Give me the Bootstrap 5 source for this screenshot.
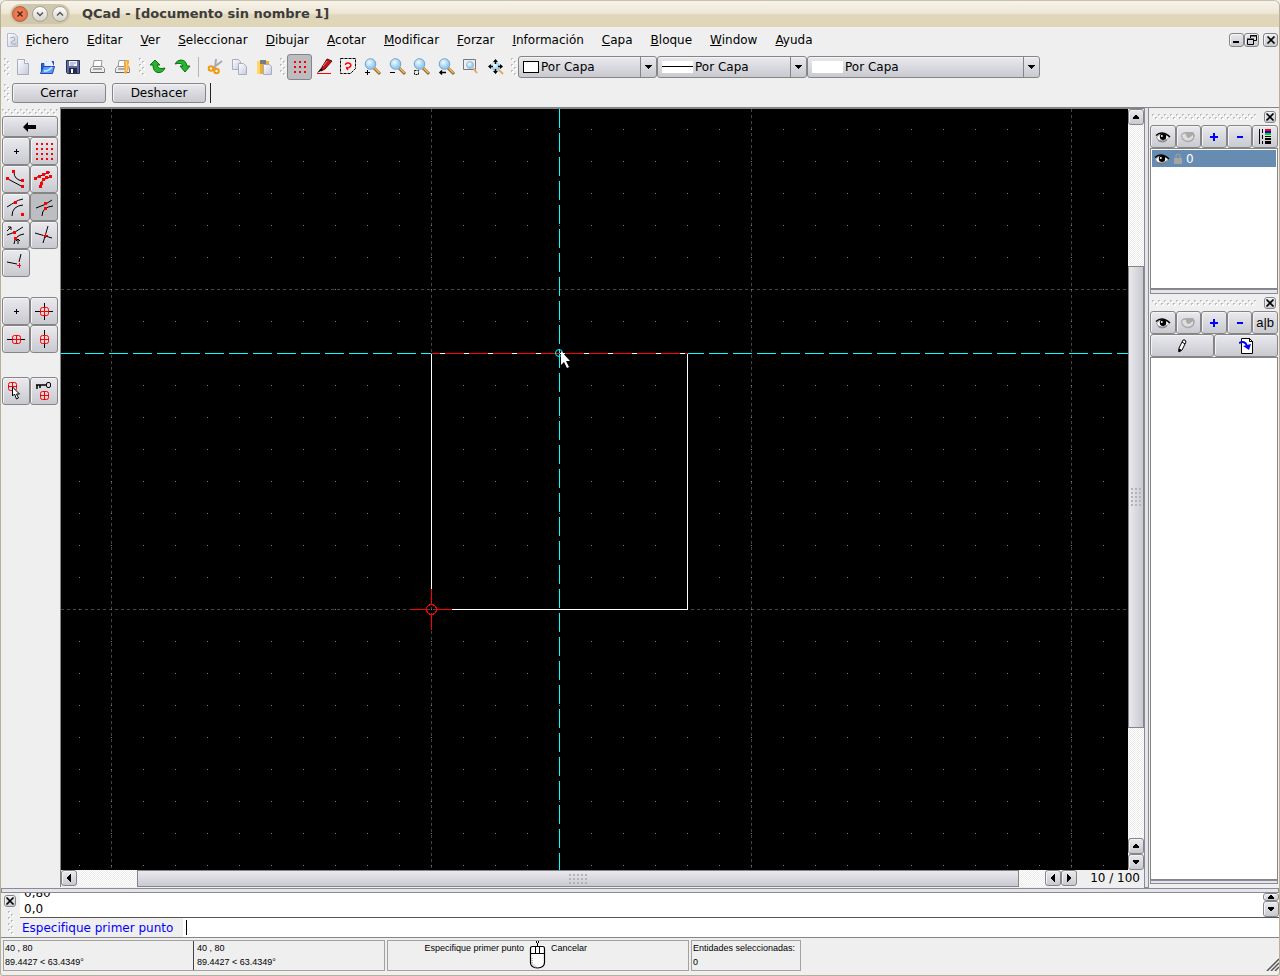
<!DOCTYPE html>
<html lang="es">
<head>
<meta charset="utf-8">
<meta name="viewport" content="width=device-width, initial-scale=1">
<title>QCad - [documento sin nombre 1]</title>
<link href="https://cdn.jsdelivr.net/npm/bootstrap@5.3.0/dist/css/bootstrap.min.css" rel="stylesheet">
<style>
  :root { --face: #efefef; --edge: #858585; --btn: linear-gradient(#e9e9ee, #c9cad0); }
  body { font-family: "DejaVu Sans", sans-serif; font-size: 12px; line-height: 16px; color: #000; background: #efefef; }
  svg { display: block; flex: none; }
  .win { border: 1px solid #b9ae96; border-top-color: #c9c0aa; border-radius: 6px 6px 3px 3px; background: var(--face); }
  /* title bar */
  .titlebar { height: 26px; padding-left: 9px; border-radius: 5px 5px 0 0; background: linear-gradient(#f7f3ea 0, #eee7d6 45%, #e0d6b9 55%, #dfd5b7 100%); }
  .titlebar h1 { font-size: 13px; line-height: 16px; font-weight: bold; color: #3c3c3c; margin: 0 0 0 12px; }
  .wbtns { height: 20px; border-radius: 10px; padding: 0 2px; gap: 4px; background: #cfc6ae; }
  .wbtns button { border: 1px solid #a9a292; border-radius: 50%; width: 16px; height: 16px; padding: 0; background: linear-gradient(#fff, #d5d1c6); display: flex; align-items: center; justify-content: center; }
  .wbtns .close-w { background: radial-gradient(#f58a63, #e2673f); border-color: #b0603f; }
  /* menu */
  .menubar { height: 26px; padding: 0 1px 0 5px; }
  .menubar a { color: #000; text-decoration: none; padding: 0 9px; }
  .menubar a:first-of-type { padding-left: 7px; }
  .menubar u { text-underline-offset: 1px; }
  /* generic button */
  .qb { border: 1px solid var(--edge); border-radius: 3px; background: var(--btn); padding: 0; color: #000; display: flex; align-items: center; justify-content: center; box-shadow: inset 1px 1px 0 #f4f4f7; }
  .qb.on { background: #bdbec2; box-shadow: none; }
  .mini { width: 12px; height: 12px; }
  .mdi { width: 15px; height: 14px; }
  /* drag handles */
  .grip { background-image: url("data:image/svg+xml,%3Csvg xmlns='http://www.w3.org/2000/svg' width='6' height='6'%3E%3Cpath fill='%23fff' d='M1 1h2v2H1zM4 4h2v2H4z'/%3E%3Cpath fill='%23bdbdbd' d='M0 0h2v1H1v1H0zM3 3h2v1H4v1H3z'/%3E%3C/svg%3E"); flex: none; }
  .grip-v { width: 6px; height: 18px; }
  .grip-h { height: 6px; }
  .tools { height: 27px; padding-left: 3px; }
  .tb { border: 0; background: none; width: 25px; height: 26px; padding: 0; display: flex; align-items: center; justify-content: center; }
  .tb.on { border: 1px solid var(--edge); border-radius: 3px; background: #bcbdc1; }
  .viewtools { width: 196px; }
  .viewtools .tb { flex: 1 1 0; min-width: 0; }
  .sep { width: 1px; height: 20px; background: #b4b4b4; }
  .tools .sep { margin: 0 3px; }
  .tools .grip-mid { margin: 0 1px 0 3px; }
  .combo { border: 1px solid var(--edge); border-radius: 3px; background: var(--btn); height: 22px; box-shadow: inset 0 1px 0 #f4f4f7; }
  .combo select { appearance: none; border: 0; outline: 0; padding: 0 0 0 2px; height: 20px; flex: 1; min-width: 0; font-size: 12px; line-height: 16px; color: #000;
    background: url("data:image/svg+xml,%3Csvg xmlns='http://www.w3.org/2000/svg' width='16' height='20'%3E%3Cpath fill='%23858585' d='M0 0h1v20H0z'/%3E%3Cpath d='M5 8h7v1h-1v1h-1v1H9v1H8v-1H7v-1H6V9H5z'/%3E%3C/svg%3E") right top no-repeat; }
  .sw { width: 31px; height: 12px; background: #fff; margin-left: 4px; }
  .sw-box { width: 16px; border: 1px solid #000; }
  .sw-line { background: linear-gradient(#000, #000) center / 100% 1px no-repeat #fff; }
  .opts { height: 27px; padding: 0 0 2px 3px; }
  .opts .qb { height: 20px; width: 94px; margin-left: 2px; }
  .opts .qb + .qb { margin-left: 6px; }
  /* tool palette */
  .palette { width: 59px; flex: none; padding: 2px 2px 0 1px; }
  .palette .grip { margin-bottom: 1px; }
  .palette .qb { width: 28px; height: 28px; }
  .palette .qb.back { width: 56px; height: 21px; }
  /* drawing area */
  .frame { border: 2px solid #858585; border-width: 2px 0 0 1px; min-width: 0; margin-bottom: 1px; }
  .paper { background: #000; min-width: 0; min-height: 0; overflow: hidden; }
  .paper svg { width: 100%; height: 100%; }
  .vbar { width: 16px; flex: none; }
  .hbar { height: 17px; flex: none; }
  .vbar .qb, .hbar .qb { width: 16px; height: 16px; flex: none; }
  .track { background: repeating-conic-gradient(#fff 0 25%, #ececec 0 50%) 0 0 / 2px 2px; flex-basis: 0; }
  .thumb { border: 1px solid var(--edge); background: var(--btn); flex-basis: 0; display: flex; align-items: center; justify-content: center; }
  .vbar .thumb { background: linear-gradient(90deg, #e9e9ee, #c9cad0); }
  .knurl { width: 18px; height: 10px; background: radial-gradient(circle at 1px 1px, #b4b4b8 1px, transparent 1px) 0 0 / 4px 4px; }
  .vbar .knurl { width: 10px; height: 18px; }
  .zoomtxt { width: 67px; text-align: right; padding-right: 4px; flex: none; }
  .split { border: 1px solid #8a8b94; background: #e4e4ea; flex: none; }
  .dock { width: 130px; flex: none; border-top: 1px solid var(--edge); padding: 0 1px; }
  .dock-head { height: 17px; padding: 0 2px; }
  .dock .qb.cell { height: 23px; flex: 1 1 0; }
  .dock .qb.abtxt { font-family: "Liberation Sans", sans-serif; font-size: 13px; }
  .dock ul { list-style: none; margin: 0; padding: 1px; background: #fff; border: 1px solid #858585; }
  .dock li { background: #668cb2; color: #fff; height: 17px; padding-left: 2px; }
  .layers { height: 141px; }
  /* command line */
  .cmd { height: 45px; flex: none; border-bottom: 1px solid var(--edge); }
  .cmd-side { width: 19px; padding: 2px 0 0 3px; }
  .history { height: 25px; background: #fff; border-bottom: 1px solid #555; }
  .history .lines { padding-left: 4px; overflow: hidden; }
  .history .qb { width: 16px; }
  .prompt { color: #00f; padding: 0 10px 0 2px; }
  .entry { border: 0; outline: 0; background: #fff; padding: 0; min-width: 0; height: 19px; }
  .caret-i { width: 1px; height: 15px; background: #000; margin-left: 3px; }
  .entrybox { background: #fff; }
  /* status */
  .stat { height: 37px; font-family: "Liberation Sans", sans-serif; font-size: 9px; line-height: 14px; padding: 2px 0 0 2px; gap: 2px; flex: none; }
  .stat .pane { border: 1px solid #a2a2a2; height: 31px; padding-left: 1px; }
  .co1 { width: 188px; } .co2 { width: 191px; border-left: 1px solid #444; padding-left: 3px; height: 29px; }
  .hint { width: 302px; } .hint span { width: 135px; text-align: right; }
  .hint span + svg + span { text-align: left; width: 100px; }
  .selcount { width: 110px; }
</style>
</head>
<body>
<svg width="0" height="0" class="position-absolute" aria-hidden="true">
  <defs>
    <linearGradient id="gp" x2="1" y2="1"><stop stop-color="#fff"/><stop offset="1" stop-color="#c5c9de"/></linearGradient>
    <radialGradient id="gl" cx=".4" cy=".35"><stop stop-color="#f2fbff"/><stop offset="1" stop-color="#94cdf0"/></radialGradient>
    <symbol id="page" viewBox="0 0 16 16"><path d="M2.500 .5h7l4 4v11h-11z" fill="url(#gp)" stroke="#a9adc2"/><path d="M9.500 .5v4h4" fill="#fff" stroke="#a9adc2"/></symbol>
    <symbol id="lens" viewBox="0 0 18 18"><path d="M10 10l6 6" stroke="#8a6630" stroke-width="3"/><path d="M10.500 10l5 5" stroke="#f5b65c" stroke-width="1.500"/><circle cx="6.500" cy="6" r="5.300" fill="url(#gl)" stroke="#7b9fc8"/></symbol>
    <symbol id="eye" viewBox="0 0 16 12"><path d="M1.500 6Q7 0 14.500 6Q10 11.500 3 9z" fill="#fff" stroke="#999"/><path d="M1 4.500Q7-1 15 6" fill="none" stroke="#000" stroke-width="1.500"/><circle cx="8" cy="5.800" r="3.200"/><circle cx="6.800" cy="5" r="1" fill="#fff"/><path d="M3 9.500q5 3 9-.5" fill="none" stroke="#777"/></symbol>
    <symbol id="eyeoff" viewBox="0 0 16 12"><path d="M1 4Q2 1 7 1h6l2 3-1 4q-3 4-8 3Q1 9 1 4z" fill="#aaa"/><path d="M2 4q2-2 4-1 0 4 3 4l4-3v3q-3 4-8 2-3-2-3-5z" fill="#dedede"/></symbol>
    <symbol id="x" viewBox="0 0 10 10"><path d="M1.500 1.500l7 7M8.500 1.500l-7 7" stroke="#000" stroke-width="1.700"/></symbol>
    <symbol id="up" viewBox="0 0 8 4"><path d="M3 0h2v1h1v1h1v2H1V2h1V1h1z"/></symbol>
    <symbol id="dn" viewBox="0 0 8 4"><path d="M1 0h6v2H6v1H5v1H3V3H2V2H1z"/></symbol>
    <symbol id="lf" viewBox="0 0 4 8"><path d="M4 0v8H3V7H2V6H1V5H0V3h1V2h1V1h1V0z"/></symbol>
    <symbol id="rt" viewBox="0 0 4 8"><path d="M0 0v8h1V7h1V6h1V5h1V3H3V2H2V1H1V0z"/></symbol>
    <symbol id="tgt" viewBox="0 0 10 10"><rect x="1.500" y="1.500" width="8" height="8" rx="2" fill="none" stroke="#f00"/><path d="M1 5.500h8M5.500 1v8" stroke="#f00" fill="none"/></symbol>
  </defs>
</svg>
<div class="win d-flex flex-column vh-100 overflow-hidden">
  <header class="titlebar d-flex align-items-center">
    <div class="wbtns d-flex align-items-center">
      <button class="close-w" aria-label="Cerrar ventana"><svg width="8" height="8"><path d="M1.500 1.500l5 5M6.500 1.500l-5 5" stroke="#5a2a18" stroke-width="1.600"/></svg></button>
      <button aria-label="Minimizar ventana"><svg width="8" height="6"><path d="M1 1.500l3 3 3-3" fill="none" stroke="#555" stroke-width="1.500"/></svg></button>
      <button aria-label="Maximizar ventana"><svg width="8" height="6"><path d="M1 4.500l3-3 3 3" fill="none" stroke="#555" stroke-width="1.500"/></svg></button>
    </div>
    <h1>QCad - [documento sin nombre 1]</h1>
  </header>

  <nav class="menubar d-flex align-items-center" aria-label="Menú">
    <svg width="13" height="14" viewBox="0 0 13 14"><path d="M1.500 .5h7l3 3v10h-10z" fill="url(#gp)" stroke="#b5bac9"/><path d="M4 5l4-1 1 3-4 2 1 2h4" fill="none" stroke="#a3adc0"/></svg>
    <a href="#"><u>F</u>ichero</a><a href="#"><u>E</u>ditar</a><a href="#"><u>V</u>er</a><a href="#"><u>S</u>eleccionar</a><a href="#"><u>D</u>ibujar</a><a href="#"><u>A</u>cotar</a><a href="#"><u>M</u>odificar</a><a href="#"><u>F</u>orzar</a><a href="#"><u>I</u>nformación</a><a href="#"><u>C</u>apa</a><a href="#"><u>B</u>loque</a><a href="#"><u>W</u>indow</a><a href="#"><u>A</u>yuda</a>
    <div class="d-flex ms-auto">
      <button class="qb mdi" aria-label="Minimizar"><svg width="7" height="8"><path d="M0 5h6v2H0z"/></svg></button>
      <button class="qb mdi" aria-label="Restaurar"><svg width="10" height="10"><path d="M3.500 3V.5h6v5H7M3 1h7" fill="none" stroke="#000"/><path d="M.5 4.500h6v5h-6zM0 4h7" fill="none" stroke="#000"/></svg></button>
      <button class="qb mdi ms-1" aria-label="Cerrar documento"><svg width="10" height="10"><use href="#x"/></svg></button>
    </div>
  </nav>

  <div class="tools d-flex align-items-center" role="toolbar" aria-label="Herramientas">
    <span class="grip grip-v"></span>
    <button class="tb" aria-label="Nuevo"><svg width="16" height="16"><use href="#page"/></svg></button>
    <button class="tb" aria-label="Abrir"><svg width="18" height="16"><path d="M2.500 14V4.500h4l1-2h7V8" fill="#2f62d8" stroke="#1f49b0"/><path d="M5 3l7-2 3 6-9 3z" fill="#e7f0ff"/><path d="M1.500 14.500l3-7h11l-2 7z" fill="#5b98ff" stroke="#1f49b0"/><path d="M5 12q5 0 8-4" stroke="#bfe0ff" fill="none" stroke-width="2"/></svg></button>
    <button class="tb" aria-label="Guardar"><svg width="16" height="16"><path d="M1.500 1.500h13v13h-12l-1-1z" fill="#5f6a9e" stroke="#2b3158"/><path d="M4 2h8v5H4z" fill="#f2f3fa"/><path d="M5 4h6M5 6h4" stroke="#8b93b5"/><path d="M4 9h8v5H4z" fill="#252a48"/><path d="M6 10h2v4H6z" fill="#fff"/></svg></button>
    <button class="tb" aria-label="Imprimir"><svg width="17" height="16"><path d="M5 1.500h8l-1 7H4z" fill="#fff" stroke="#999"/><path d="M1.500 9.500l2-2h10l2 2v4h-14z" fill="#eeeeea" stroke="#888"/><path d="M2 13.500h13M4 10h9" stroke="#666"/></svg></button>
    <button class="tb" aria-label="Vista previa"><svg width="17" height="16"><path d="M5 1.500h8l-1 7H4z" fill="#fff" stroke="#999"/><path d="M1.500 9.500l2-2h10l2 2v4h-14z" fill="#eeeeea" stroke="#888"/><path d="M2 13.500h13M4 10h9" stroke="#666"/><path d="M10 2l5-1v3l-1 2 2 2-2 3-2 4-2-1 1-4-1-2z" fill="#f9a53a"/><path d="M12 2l1 5-1 5" stroke="#ffe48a" fill="none"/></svg></button>
    <span class="grip grip-v ms-1"></span>
    <button class="tb" aria-label="Deshacer acción"><svg width="17" height="15"><path d="M1 6l5-5 5 5H8q1 5 8 3-2 5-7 4.500Q4 13 4 6z" fill="#25b82d" stroke="#0b6d12"/></svg></button>
    <button class="tb" aria-label="Rehacer"><svg width="17" height="15"><path d="M1 5q2-4 6-4 5 0 6 6h3l-5 6-5-6h3Q8 3 1 5z" fill="#25b82d" stroke="#0b6d12"/></svg></button>
    <span class="sep"></span>
    <button class="tb" aria-label="Cortar"><svg width="16" height="17"><path d="M9 1l-1 9M15 3L6 10" stroke="#a5aab8" stroke-width="2"/><circle cx="4" cy="10.500" r="2.300" fill="none" stroke="#f09a10" stroke-width="2"/><circle cx="9.500" cy="13" r="2.300" fill="none" stroke="#f09a10" stroke-width="2"/></svg></button>
    <button class="tb" aria-label="Copiar"><svg width="17" height="16"><path d="M1.500 .5h6l2 2v8h-8z" fill="url(#gp)" stroke="#a9adc2"/><path d="M7.500 4.500h5l3 3v8h-8z" fill="url(#gp)" stroke="#a9adc2"/></svg></button>
    <button class="tb" aria-label="Pegar"><svg width="17" height="16"><path d="M1 2h12v13H1z" fill="#f1ae2e"/><path d="M1 2h3v13H1z" fill="#ffd66a"/><path d="M4 1h6v4H4z" fill="#777b82"/><path d="M7.500 5.500h6l2 2v8h-8z" fill="url(#gp)" stroke="#a9adc2"/></svg></button>
    <span class="grip grip-v grip-mid"></span>
    <button class="tb on" aria-label="Rejilla" aria-pressed="true"><svg width="12" height="12"><path d="M0 1h12M0 6h12M0 11h12" stroke="#f00" stroke-width="2" stroke-dasharray="2 3"/></svg></button>
    <div class="viewtools d-flex">
      <button class="tb" aria-label="Borrador"><svg width="17" height="17"><path d="M1 15.500h14" stroke="#f00"/><path d="M11 1l5 2-7 8-4 2 1-4z" fill="#c8141b" stroke="#5a0808"/><path d="M11 3L7 8" stroke="#ff7f7f"/><path d="M1 15l4-5 2 2z" fill="#111"/></svg></button>
      <button class="tb" aria-label="Redibujar"><svg width="17" height="17"><path d="M.5 .5h15v10l-5 5H.5z" fill="none" stroke="#000" stroke-dasharray="3 1"/><path d="M5.500 7q0-2 2.500-2t3 2q0 2-3 3H6M7.500 9l-1 1 1.500 2" fill="none" stroke="#f00" stroke-width="1.300"/></svg></button>
      <button class="tb" aria-label="Acercar"><svg width="18" height="18"><use href="#lens"/><path d="M1 14.500h5M3.500 12v5" stroke="#000"/></svg></button>
      <button class="tb" aria-label="Alejar"><svg width="18" height="18"><use href="#lens"/><path d="M1 14.500h5" stroke="#000"/></svg></button>
      <button class="tb" aria-label="Zoom automático"><svg width="18" height="18"><use href="#lens"/><path d="M1.500 12.500h4v4h-4z" fill="none" stroke="#000" stroke-dasharray="2 1"/></svg></button>
      <button class="tb" aria-label="Zoom anterior"><svg width="18" height="18"><use href="#lens"/><path d="M2 14.500h6M4 12.500l-2 2 2 2" fill="none" stroke="#000" stroke-width="1.500"/></svg></button>
      <button class="tb" aria-label="Zoom ventana"><svg width="18" height="18"><path d="M1.500 1.500h12v10h-12z" fill="none" stroke="#777"/><path d="M11 10l4 5" stroke="#e0aa60" stroke-width="2"/><circle cx="8" cy="7" r="3.500" fill="url(#gl)" stroke="#9bbad8"/></svg></button>
      <button class="tb" aria-label="Desplazar vista"><svg width="18" height="18"><path d="M11 11l5 5" stroke="#e0aa60" stroke-width="2"/><circle cx="8.500" cy="8.500" r="4.500" fill="url(#gl)"/><path d="M8.500 2v4M8.500 11v4M2 8.500h4M11 8.500h4" stroke="#000" stroke-width="1.500"/><path d="M6 4h5L8.500 1zM6 13h5l-2.500 3zM4 6v5L1 8.500zM13 6v5l3-2.500z"/></svg></button>
    </div>
    <span class="grip grip-v grip-mid"></span>
    <div class="combo d-flex align-items-center" style="width:139px"><span class="sw sw-box"></span><select aria-label="Color"><option>Por Capa</option></select></div>
    <div class="combo d-flex align-items-center" style="width:150px"><span class="sw sw-line"></span><select aria-label="Grosor"><option>Por Capa</option></select></div>
    <div class="combo d-flex align-items-center" style="width:233px"><span class="sw"></span><select aria-label="Tipo de línea"><option>Por Capa</option></select></div>
  </div>

  <div class="opts d-flex align-items-center">
    <span class="grip grip-v"></span>
    <button class="qb">Cerrar</button><button class="qb">Deshacer</button>
    <span class="sep bg-dark ms-1"></span>
  </div>

  <main class="d-flex flex-fill overflow-hidden">
    <aside class="palette">
      <div class="grip grip-h"></div>
      <button class="qb back" aria-label="Volver"><svg width="14" height="10"><path d="M0 5l5-5v3h8v4H5v3z"/></svg></button>
      <div class="d-flex flex-wrap">
        <button class="qb" aria-label="Libre"><svg width="5" height="5"><path d="M0 2.500h5M2.500 0v5" stroke="#000"/></svg></button>
        <button class="qb" aria-label="Rejilla"><svg width="18" height="18"><path d="M1 2h17M1 7h17M1 12h17M1 17h17" stroke="#f00" stroke-width="2" stroke-dasharray="2 3"/></svg></button>
        <button class="qb" aria-label="Puntos finales"><svg width="20" height="20"><path d="M8 3q0 8 9 9M2 10l15 8" fill="none" stroke="#000"/><path d="M6 1h3v3H6zM0 8h3v3H0zM15 10h3v3h-3zM15 16h3v3h-3z" fill="#f00"/></svg></button>
        <button class="qb" aria-label="En entidad"><svg width="20" height="20"><path d="M1 9l15-6M6 17q1-8 12-9" fill="none" stroke="#000"/><path d="M0 8h3v3H0zM4 6h3v3H4zM8 4h3v3H8zM12 2h3v3h-3zM15 6h3v3h-3zM11 7h3v3h-3zM8 9h3v3H8zM6 13h3v3H6zM5 16h3v3H5z" fill="#f00"/></svg></button>
        <button class="qb" aria-label="Centro"><svg width="20" height="20"><path d="M1 10q5-3 8-5t8-3M6 19q0-10 11-11" fill="none" stroke="#000"/><path d="M8 4h3v3H8zM15 16h3v3h-3z" fill="#f00"/></svg></button>
        <button class="qb on" aria-label="Medio" aria-pressed="true"><svg width="20" height="20"><path d="M2 11q10-3 16-8M8 19q0-9 11-10" fill="none" stroke="#000"/><path d="M10 5h3v3h-3zM10 10h3v3h-3z" fill="#f00"/></svg></button>
        <button class="qb" aria-label="Distancia"><svg width="20" height="20"><path d="M1 10Q9 8 17 2M8 19q1-9 10-10M1 6l4-4M2 2h3v3M12 19v-5M10 16l2-2 2 2" fill="none" stroke="#000"/><path d="M7 6h3v3H7zM8 12h3v3H8z" fill="#f00"/></svg></button>
        <button class="qb" aria-label="Intersección"><svg width="20" height="20"><path d="M1 8l17 5M14 1L9 18" fill="none" stroke="#000"/><path d="M9 10.500h5M11.500 8v5" stroke="#f00"/></svg></button>
        <button class="qb" aria-label="Intersección manual"><svg width="20" height="20"><path d="M1 9l10 2M15 1l-2 8" fill="none" stroke="#000"/><path d="M11 12.500h4M13.500 10v5" stroke="#f00"/></svg></button>
      </div>
      <div class="d-flex flex-wrap mt-3 pt-1">
        <button class="qb" aria-label="Sin restricción"><svg width="5" height="5"><path d="M0 2.500h5M2.500 0v5" stroke="#000"/></svg></button>
        <button class="qb" aria-label="Ortogonal"><svg width="18" height="18"><path d="M0 9.500h18M9.500 1v17" stroke="#000"/><use href="#tgt" x="4" y="4" width="10" height="10"/></svg></button>
        <button class="qb" aria-label="Horizontal"><svg width="18" height="18"><path d="M0 9.500h18" stroke="#000"/><use href="#tgt" x="4" y="4" width="10" height="10"/></svg></button>
        <button class="qb" aria-label="Vertical"><svg width="18" height="18"><path d="M9.500 0v18" stroke="#000"/><use href="#tgt" x="4" y="4" width="10" height="10"/></svg></button>
      </div>
      <div class="d-flex mt-4">
        <button class="qb" aria-label="Mover cero relativo"><svg width="20" height="20"><use href="#tgt" x="1" y="0" width="10" height="10"/><path d="M6.500 6v9l2-2 2 5 2-1-2-4h3z" fill="#fff" stroke="#000"/></svg></button>
        <button class="qb" aria-label="Bloquear cero relativo"><svg width="20" height="20"><path d="M2 4h10M3 4v4M6 4v3" stroke="#000" stroke-width="1.500"/><rect x="12.500" y="1.500" width="4" height="5" rx="1.500" fill="none" stroke="#000"/><use href="#tgt" x="5" y="9" width="10" height="10"/></svg></button>
      </div>
    </aside>

    <section class="frame d-flex flex-column flex-fill">
      <div class="d-flex flex-fill overflow-hidden">
        <div class="paper flex-fill">
          <svg shape-rendering="crispEdges" role="img" aria-label="Dibujo">
            <defs>
              <pattern id="dots" x="18" y="20" width="32" height="32" patternUnits="userSpaceOnUse"><rect width="1" height="1" fill="#808080"/></pattern>
            </defs>
            <g stroke="#444" stroke-dasharray="3 3">
              <line x1="50.500" y1="0" x2="50.500" y2="100%"/><line x1="370.500" y1="0" x2="370.500" y2="100%"/><line x1="690.500" y1="0" x2="690.500" y2="100%"/><line x1="1010.500" y1="0" x2="1010.500" y2="100%"/>
              <line x1="0" y1="180.500" x2="100%" y2="180.500"/><line x1="0" y1="500.500" x2="100%" y2="500.500"/>
            </g>
            <rect width="100%" height="100%" fill="url(#dots)"/>
            <path d="M370.500 244v237M391 500.500h236M626.500 244v257M370 244.500h257" stroke="#fff" fill="none"/>
            <g stroke="#0ff" stroke-dasharray="19 5"><line x1="0" y1="244.500" x2="370" y2="244.500"/><line x1="627" y1="244.500" x2="100%" y2="244.500" stroke-dashoffset="3"/><line x1="498.500" y1="0" x2="498.500" y2="100%"/></g>
            <path d="M370 244.500h257" stroke="#f00" stroke-dasharray="19 5" stroke-dashoffset="10"/>
            <path d="M350 500.500h16M375 500.500h16M370.500 480v16M370.500 505v16" stroke="#f00"/>
            <circle cx="370.500" cy="500.500" r="5" fill="none" stroke="#f00"/>
            <circle cx="498" cy="244" r="3.500" fill="none" stroke="#0ff" shape-rendering="auto"/>
            <path d="M500 242v14l3-3 3 6 2-1-3-6h4z" fill="#fff" shape-rendering="auto"/>
          </svg>
        </div>
        <div class="vbar d-flex flex-column">
          <button class="qb" aria-label="Arriba"><svg width="8" height="4"><use href="#up"/></svg></button>
          <div class="track" style="flex-grow:141"></div>
          <div class="thumb" style="flex-grow:462"><i class="knurl"></i></div>
          <div class="track" style="flex-grow:110"></div>
          <button class="qb" aria-label="Arriba"><svg width="8" height="4"><use href="#up"/></svg></button>
          <button class="qb" aria-label="Abajo"><svg width="8" height="4"><use href="#dn"/></svg></button>
        </div>
      </div>
      <div class="hbar d-flex">
        <button class="qb" aria-label="Izquierda"><svg width="4" height="8"><use href="#lf"/></svg></button>
        <div class="track" style="flex-grow:60"></div>
        <div class="thumb" style="flex-grow:882"><i class="knurl"></i></div>
        <div class="track" style="flex-grow:26"></div>
        <button class="qb" aria-label="Izquierda"><svg width="4" height="8"><use href="#lf"/></svg></button>
        <button class="qb" aria-label="Derecha"><svg width="4" height="8"><use href="#rt"/></svg></button>
        <span class="zoomtxt">10 / 100</span>
      </div>
    </section>
    <div class="split" style="width:5px"></div>

    <aside class="dock d-flex flex-column">
      <div class="dock-head d-flex align-items-center gap-2"><span class="grip grip-h flex-fill"></span><button class="qb mini" aria-label="Cerrar capas"><svg width="10" height="10"><use href="#x"/></svg></button></div>
      <div class="d-flex">
        <button class="qb cell" aria-label="Mostrar capas"><svg width="16" height="12"><use href="#eye"/></svg></button>
        <button class="qb cell" aria-label="Ocultar capas"><svg width="16" height="12"><use href="#eyeoff"/></svg></button>
        <button class="qb cell" aria-label="Añadir capa"><svg width="8" height="8"><path d="M0 4h8M4 0v8" stroke="#00f" stroke-width="2"/></svg></button>
        <button class="qb cell" aria-label="Quitar capa"><svg width="8" height="8"><path d="M1 4h6" stroke="#00f" stroke-width="2"/></svg></button>
        <button class="qb cell" aria-label="Atributos de capa"><svg width="13" height="15"><path d="M.5 0v15" stroke="#000"/><path d="M3.500 0v15" stroke="#000" stroke-dasharray="4 2"/><path d="M6 0h6v2H6z" fill="#f00"/><path d="M6 2h6v2H6z" fill="#00f"/><path d="M6 4h6v2H6z" fill="#0d0"/><path d="M6 7h6v1H6zM6 9h6v2H6zM6 12h6v3H6z"/></svg></button>
      </div>
      <ul class="layers"><li class="d-flex align-items-center gap-1"><svg width="16" height="12"><use href="#eye"/></svg><svg width="8" height="12"><path d="M0 5h8v6H0z" fill="#a5a5a5"/><path d="M2 5V2q2-2 4 0v3" fill="none" stroke="#a5a5a5"/></svg><span>0</span></li></ul>
      <div class="split" style="height:5px"></div>
      <div class="dock-head d-flex align-items-center gap-2"><span class="grip grip-h flex-fill"></span><button class="qb mini" aria-label="Cerrar bloques"><svg width="10" height="10"><use href="#x"/></svg></button></div>
      <div class="d-flex">
        <button class="qb cell" aria-label="Mostrar bloques"><svg width="16" height="12"><use href="#eye"/></svg></button>
        <button class="qb cell" aria-label="Ocultar bloques"><svg width="16" height="12"><use href="#eyeoff"/></svg></button>
        <button class="qb cell" aria-label="Añadir bloque"><svg width="8" height="8"><path d="M0 4h8M4 0v8" stroke="#00f" stroke-width="2"/></svg></button>
        <button class="qb cell" aria-label="Quitar bloque"><svg width="8" height="8"><path d="M1 4h6" stroke="#00f" stroke-width="2"/></svg></button>
        <button class="qb cell abtxt" aria-label="Renombrar bloque">a|b</button>
      </div>
      <div class="d-flex">
        <button class="qb cell" aria-label="Editar bloque"><svg width="9" height="14"><path d="M5 1h2l1 2-4 8-3 2V9z" fill="#fff" stroke="#000"/><path d="M1 13v-3l2 1zM4 3l3 2" stroke="#000"/></svg></button>
        <button class="qb cell" aria-label="Insertar bloque"><svg width="15" height="16"><path d="M2.500 .5h8l3 3v12h-11z" fill="#fff" stroke="#000"/><path d="M10.500 0v3.500H14" fill="none" stroke="#000"/><path d="M0 5q6-3 8 3" fill="none" stroke="#00f" stroke-width="2"/><path d="M4 8l8-2-2 6z" fill="#00f"/></svg></button>
      </div>
      <ul class="flex-fill"></ul>
      <div class="split mb-1" style="height:4px"></div>
    </aside>
  </main>

  <div class="split" style="height:5px"></div>
  <section class="cmd d-flex">
    <div class="cmd-side">
      <button class="qb mini" aria-label="Cerrar consola"><svg width="10" height="10"><use href="#x"/></svg></button>
      <div class="grip mt-1 ms-1" style="width:6px;height:24px"></div>
    </div>
    <div class="flex-fill">
      <div class="history d-flex">
        <div class="lines flex-fill d-flex flex-column justify-content-end"><div>0,80</div><div>0,0</div></div>
        <div class="d-flex flex-column justify-content-end overflow-hidden"><button class="qb flex-fill" aria-label="Subir"><svg width="8" height="4"><use href="#up"/></svg></button><button class="qb" style="height:16px" aria-label="Bajar"><svg width="8" height="4"><use href="#dn"/></svg></button></div>
      </div>
      <div class="d-flex align-items-center">
        <label class="prompt" for="cmdin">Especifique primer punto</label>
        <div class="entrybox d-flex align-items-center flex-fill"><span class="caret-i"></span><input id="cmdin" class="entry flex-fill" type="text"></div>
      </div>
    </div>
  </section>

  <footer class="stat d-flex">
    <div class="pane d-flex"><div class="co1">40 , 80<br>89.4427 &lt; 63.4349°</div><div class="co2">40 , 80<br>89.4427 &lt; 63.4349°</div></div>
    <div class="pane hint d-flex"><span>Especifique primer punto</span><svg class="mx-1" width="19" height="28"><path d="M8.500 0v2M10.500 0v2M9.500 2v3" stroke="#000" fill="none"/><path d="M2.500 7.500q0-2 2-2h10q2 0 2 2v14q0 5-7 5.500-7-.5-7-5.500z" fill="#fff" stroke="#000" stroke-width="1.200"/><path d="M3 12.500h13M7.500 6v6M11.500 6v6" stroke="#000"/><path d="M4 17v6l4 3" stroke="#bbb" stroke-dasharray="1 1" stroke-width="2" fill="none"/></svg><span>Cancelar</span></div>
    <div class="pane selcount">Entidades seleccionadas:<br>0</div>
    <svg class="ms-auto align-self-end mb-1" width="13" height="13"><path d="M1 13L13 1M5 13l8-8M9 13l4-4" stroke="#555" stroke-width="1.500"/></svg>
  </footer>
</div>
<script src="https://cdn.jsdelivr.net/npm/bootstrap@5.3.0/dist/js/bootstrap.bundle.min.js"></script>
</body>
</html>
